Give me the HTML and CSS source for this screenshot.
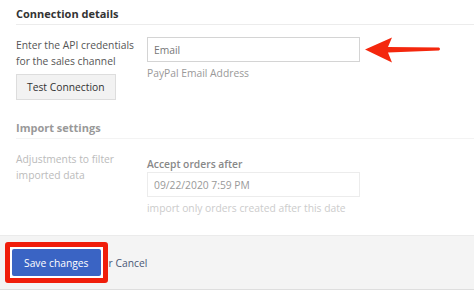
FILE: index.html
```html
<!DOCTYPE html>
<html lang="en">
<head>
    <meta charset="UTF-8">
    <title>Channel settings</title>
    <link rel="stylesheet" href="styles.css">
</head>
<body>

    <div class="content">
        <h2 class="section-title">Connection details</h2>
        <div class="section-row">
            <div class="section-desc">
                <p>Enter the API credentials for the sales channel</p>
                <button class="btn-test">Test Connection</button>
            </div>
            <div class="section-fields">
                <div class="field-wrap">
                    <input type="text" class="field" placeholder="Email">
                    <svg class="arrow" width="80" height="28" viewBox="0 0 80 28">
                        <path d="M0 12.5 L27 0.5 L23 10 L74 10.5 Q76 12 74 13.5 L23 15.5 L27 25.5 Z" fill="#f4270d"/>
                    </svg>
                </div>
                <p class="hint">PayPal Email Address</p>
            </div>
        </div>

        <div class="muted">
            <h2 class="section-title">Import settings</h2>
            <div class="section-row">
                <div class="section-desc">
                    <p>Adjustments to filter imported data</p>
                </div>
                <div class="section-fields">
                    <label class="field-label">Accept orders after</label>
                    <input type="text" class="field" value="09/22/2020 7:59 PM">
                    <p class="hint">import only orders created after this date</p>
                </div>
            </div>
        </div>
    </div>

    <div class="footer">
        <span class="highlight">
            <button class="btn-save">Save changes</button>
        </span>
        <span class="cancel">r Cancel</span>
    </div>

</body>
</html>
```

FILE: styles.css
```css
body {
    margin: 0;
    font-family: 'Open Sans', sans-serif;
    font-size: 10.3px;
    color: #555;
    background-color: white;
}
.content {
    padding: 5px 0 0 16px;
}
.section-title {
    margin: 0;
    font-size: 11px;
    font-weight: bold;
    color: #333;
    line-height: 18px;
    padding-bottom: 1px;
    border-bottom: 1px solid #ececec;
}
.section-row {
    display: flex;
    padding-top: 12px;
}
.section-desc {
    width: 131px;
}
.section-desc p {
    margin: 0;
    line-height: 16px;
    width: 122px;
}
.section-fields {
    width: 213px;
}
.field-wrap {
    position: relative;
}
.field {
    display: block;
    box-sizing: border-box;
    width: 213px;
    height: 25px;
    margin: 0;
    padding: 0 6px;
    border: 1px solid #d4d4d4;
    font-family: 'Open Sans', sans-serif;
    font-size: 10.3px;
    color: #555;
    background: white;
}
.field::placeholder {
    color: #777;
}
.arrow {
    position: absolute;
    left: 218px;
    top: 0;
}
.hint {
    margin: 3px 0 0 0;
    line-height: 16px;
    color: #999;
}
.btn-test {
    display: block;
    margin-top: 5px;
    height: 26px;
    padding: 0 10px;
    border: 1px solid #ddd;
    background-color: #f2f2f2;
    font-family: 'Open Sans', sans-serif;
    font-size: 10.3px;
    color: #333;
}
.muted {
    margin-top: 19px;
}
.muted .section-title {
    color: #999;
    border-bottom-color: #f3f3f3;
}
.muted .section-desc p {
    color: #bbb;
}
.muted .section-fields {
    padding-top: 6px;
}
.field-label {
    display: block;
    font-weight: 600;
    color: #888;
    line-height: 15px;
}
.muted .field {
    border-color: #ececec;
    color: #999;
}
.muted .hint {
    color: #ccc;
}
.footer {
    display: flex;
    align-items: center;
    margin-top: 19px;
    height: 53px;
    padding-left: 5px;
    background-color: #f4f4f4;
    border-top: 1px solid #ebebeb;
    border-bottom: 1px solid #dedede;
}
.highlight {
    display: block;
    padding: 2px;
    border: 5px solid #f01d0a;
    border-radius: 3px;
    background: white;
}
.btn-save {
    display: block;
    height: 27px;
    padding: 0 12px;
    border: none;
    border-radius: 2px;
    background-color: #3a64c4;
    color: white;
    font-family: 'Open Sans', sans-serif;
    font-size: 10.3px;
}
.cancel {
    margin-left: 1px;
    color: #4b5876;
}
```
